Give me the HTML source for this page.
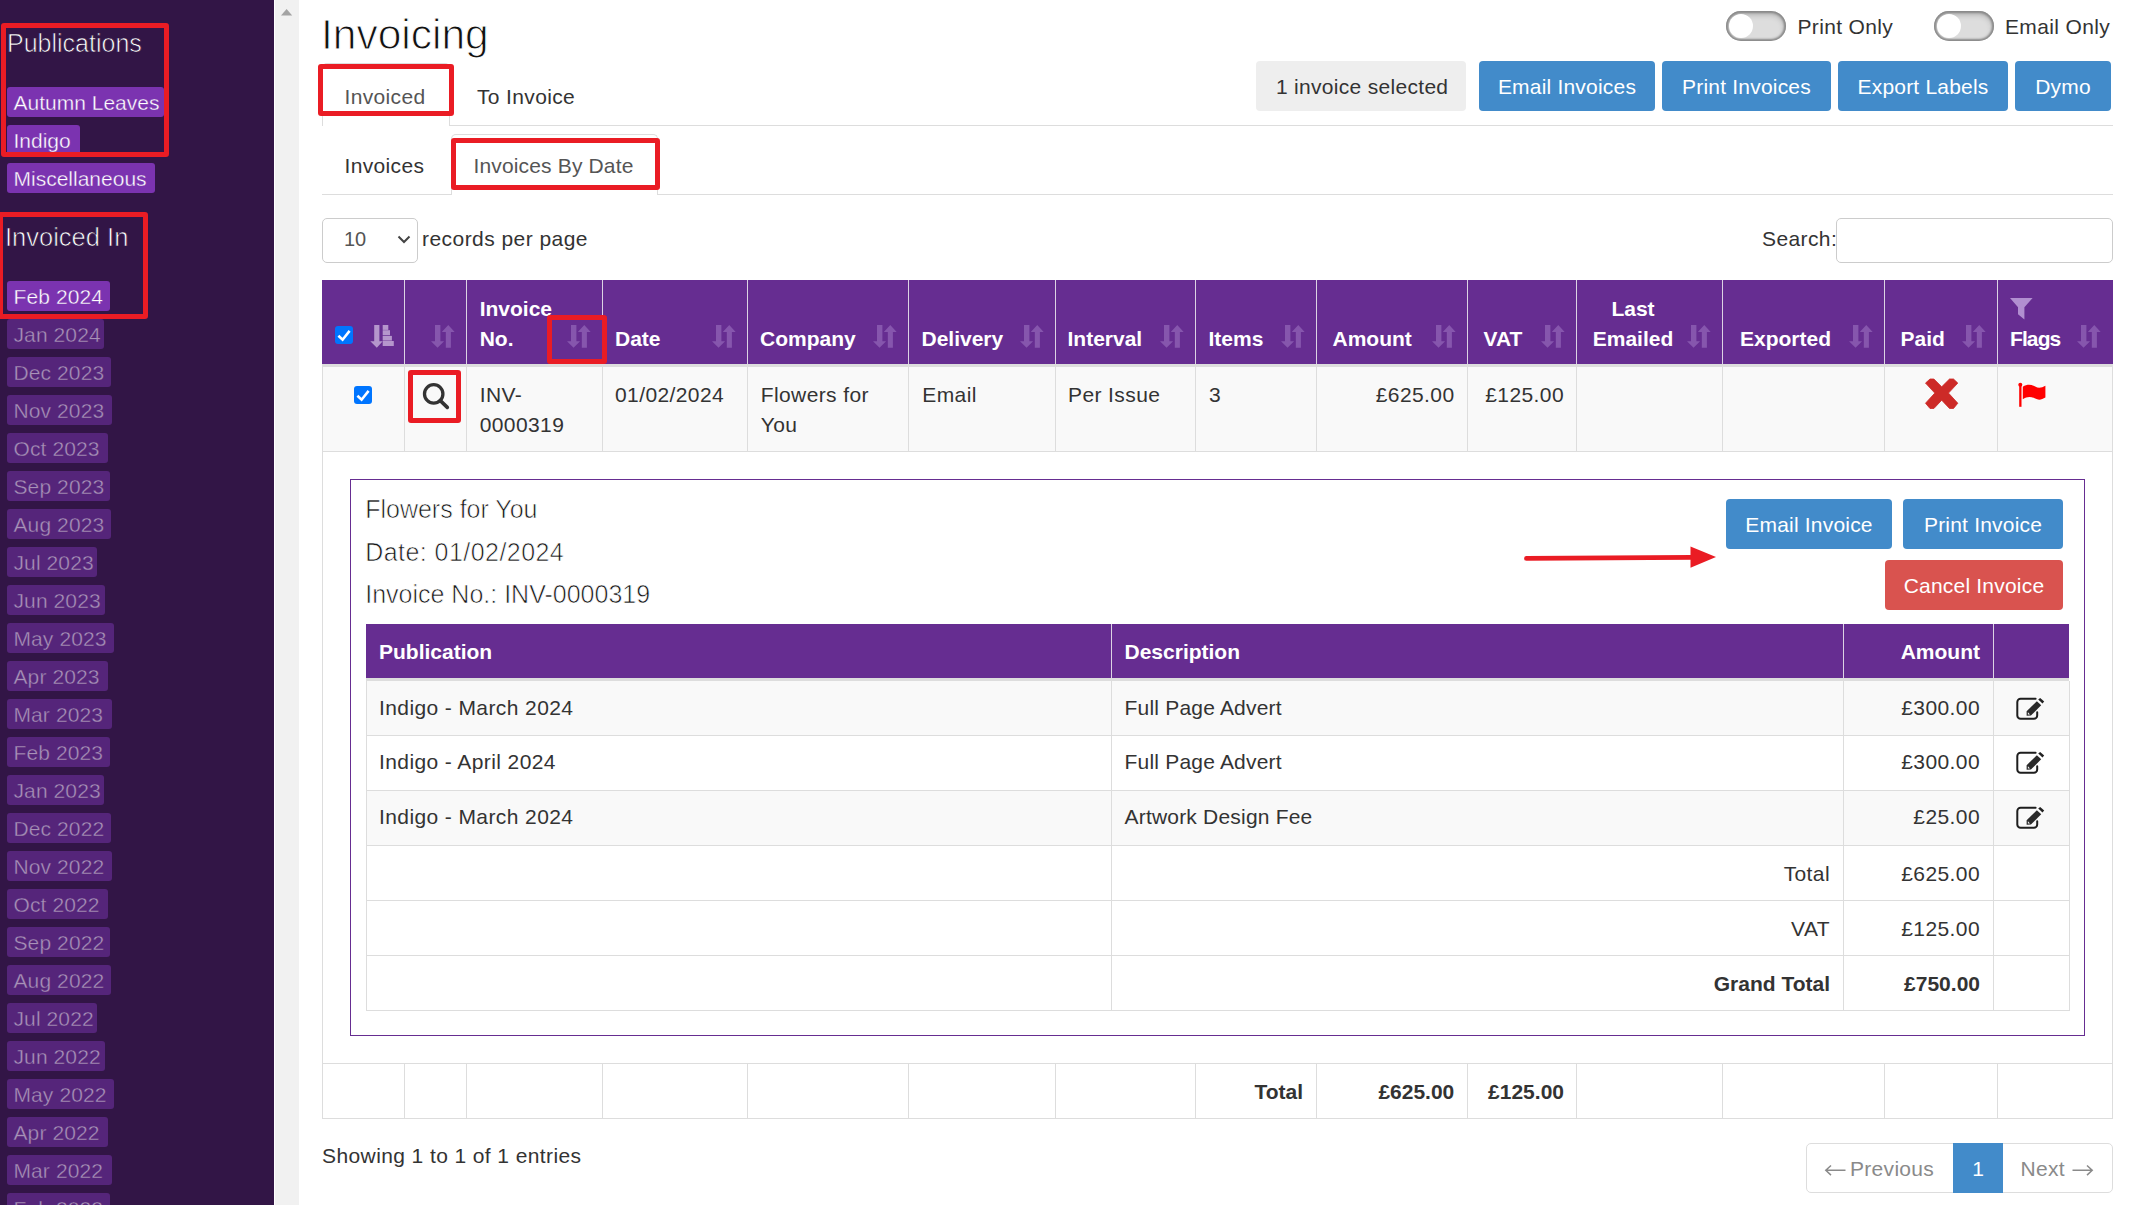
<!DOCTYPE html>
<html><head><meta charset="utf-8"><title>Invoicing</title><style>
*{margin:0;padding:0;box-sizing:border-box}
html,body{width:2132px;height:1205px;overflow:hidden;background:#fff}
body{position:relative;font-family:"Liberation Sans",sans-serif;color:#333}
.t{position:absolute;white-space:nowrap;line-height:1}
.b{position:absolute}
svg{position:absolute;overflow:visible}
</style></head><body>
<div class="b" style="left:0px;top:0px;width:274px;height:1205px;background:#321546;"></div>
<div class="b" style="left:274px;top:0px;width:1px;height:1205px;background:#fff;"></div>
<div class="b" style="left:275px;top:0px;width:24px;height:1205px;background:#f1f1f1;"></div>
<svg style="left:281px;top:9px" width="12" height="7"><path d="M0 6.5 L5.6 0 L11.2 6.5 Z" fill="#a3a3a3"/></svg>
<div class="t " style="left:7.0px;top:30.5px;font-size:25px;color:#fff;-webkit-text-stroke:0.7px #321546;">Publications</div>
<div class="b" style="left:7px;top:87px;width:157px;height:30px;background:#7b33b0;border-radius:3px;"></div>
<div class="t " style="left:13.5px;top:91.8px;font-size:21px;color:#fff;letter-spacing:0.0px;-webkit-text-stroke:0.35px #7b33b0;">Autumn Leaves</div>
<div class="b" style="left:7px;top:125px;width:73px;height:30px;background:#7b33b0;border-radius:3px;"></div>
<div class="t " style="left:13.5px;top:129.8px;font-size:21px;color:#fff;letter-spacing:0.0px;-webkit-text-stroke:0.35px #7b33b0;">Indigo</div>
<div class="b" style="left:7px;top:163px;width:148px;height:30px;background:#7b33b0;border-radius:3px;"></div>
<div class="t " style="left:13.5px;top:167.8px;font-size:21px;color:#fff;letter-spacing:0.0px;-webkit-text-stroke:0.35px #7b33b0;">Miscellaneous</div>
<div class="t " style="left:5.0px;top:224.9px;font-size:25px;color:#fff;font-size:25.5px;-webkit-text-stroke:0.7px #321546;">Invoiced In</div>
<div class="b" style="left:7px;top:281px;width:103px;height:30px;background:#7b33b0;border-radius:3px;"></div>
<div class="t " style="left:13.5px;top:285.8px;font-size:21px;color:#fff;letter-spacing:0.1px;-webkit-text-stroke:0.35px #7b33b0;">Feb 2024</div>
<div class="b" style="left:7px;top:319px;width:97px;height:30px;background:#55257a;border-radius:3px;"></div>
<div class="t " style="left:13.5px;top:323.8px;font-size:21px;color:#a892b8;letter-spacing:0.1px;-webkit-text-stroke:0.35px #55257a;">Jan 2024</div>
<div class="b" style="left:7px;top:357px;width:104px;height:30px;background:#55257a;border-radius:3px;"></div>
<div class="t " style="left:13.5px;top:361.8px;font-size:21px;color:#a892b8;letter-spacing:0.1px;-webkit-text-stroke:0.35px #55257a;">Dec 2023</div>
<div class="b" style="left:7px;top:395px;width:105px;height:30px;background:#55257a;border-radius:3px;"></div>
<div class="t " style="left:13.5px;top:399.8px;font-size:21px;color:#a892b8;letter-spacing:0.1px;-webkit-text-stroke:0.35px #55257a;">Nov 2023</div>
<div class="b" style="left:7px;top:433px;width:101px;height:30px;background:#55257a;border-radius:3px;"></div>
<div class="t " style="left:13.5px;top:437.8px;font-size:21px;color:#a892b8;letter-spacing:0.1px;-webkit-text-stroke:0.35px #55257a;">Oct 2023</div>
<div class="b" style="left:7px;top:471px;width:103px;height:30px;background:#55257a;border-radius:3px;"></div>
<div class="t " style="left:13.5px;top:475.8px;font-size:21px;color:#a892b8;letter-spacing:0.1px;-webkit-text-stroke:0.35px #55257a;">Sep 2023</div>
<div class="b" style="left:7px;top:509px;width:104px;height:30px;background:#55257a;border-radius:3px;"></div>
<div class="t " style="left:13.5px;top:513.8px;font-size:21px;color:#a892b8;letter-spacing:0.1px;-webkit-text-stroke:0.35px #55257a;">Aug 2023</div>
<div class="b" style="left:7px;top:547px;width:90px;height:30px;background:#55257a;border-radius:3px;"></div>
<div class="t " style="left:13.5px;top:551.8px;font-size:21px;color:#a892b8;letter-spacing:0.1px;-webkit-text-stroke:0.35px #55257a;">Jul 2023</div>
<div class="b" style="left:7px;top:585px;width:98px;height:30px;background:#55257a;border-radius:3px;"></div>
<div class="t " style="left:13.5px;top:589.8px;font-size:21px;color:#a892b8;letter-spacing:0.1px;-webkit-text-stroke:0.35px #55257a;">Jun 2023</div>
<div class="b" style="left:7px;top:623px;width:107px;height:30px;background:#55257a;border-radius:3px;"></div>
<div class="t " style="left:13.5px;top:627.8px;font-size:21px;color:#a892b8;letter-spacing:0.1px;-webkit-text-stroke:0.35px #55257a;">May 2023</div>
<div class="b" style="left:7px;top:661px;width:101px;height:30px;background:#55257a;border-radius:3px;"></div>
<div class="t " style="left:13.5px;top:665.8px;font-size:21px;color:#a892b8;letter-spacing:0.1px;-webkit-text-stroke:0.35px #55257a;">Apr 2023</div>
<div class="b" style="left:7px;top:699px;width:105px;height:30px;background:#55257a;border-radius:3px;"></div>
<div class="t " style="left:13.5px;top:703.8px;font-size:21px;color:#a892b8;letter-spacing:0.1px;-webkit-text-stroke:0.35px #55257a;">Mar 2023</div>
<div class="b" style="left:7px;top:737px;width:103px;height:30px;background:#55257a;border-radius:3px;"></div>
<div class="t " style="left:13.5px;top:741.8px;font-size:21px;color:#a892b8;letter-spacing:0.1px;-webkit-text-stroke:0.35px #55257a;">Feb 2023</div>
<div class="b" style="left:7px;top:775px;width:97px;height:30px;background:#55257a;border-radius:3px;"></div>
<div class="t " style="left:13.5px;top:779.8px;font-size:21px;color:#a892b8;letter-spacing:0.1px;-webkit-text-stroke:0.35px #55257a;">Jan 2023</div>
<div class="b" style="left:7px;top:813px;width:104px;height:30px;background:#55257a;border-radius:3px;"></div>
<div class="t " style="left:13.5px;top:817.8px;font-size:21px;color:#a892b8;letter-spacing:0.1px;-webkit-text-stroke:0.35px #55257a;">Dec 2022</div>
<div class="b" style="left:7px;top:851px;width:105px;height:30px;background:#55257a;border-radius:3px;"></div>
<div class="t " style="left:13.5px;top:855.8px;font-size:21px;color:#a892b8;letter-spacing:0.1px;-webkit-text-stroke:0.35px #55257a;">Nov 2022</div>
<div class="b" style="left:7px;top:889px;width:101px;height:30px;background:#55257a;border-radius:3px;"></div>
<div class="t " style="left:13.5px;top:893.8px;font-size:21px;color:#a892b8;letter-spacing:0.1px;-webkit-text-stroke:0.35px #55257a;">Oct 2022</div>
<div class="b" style="left:7px;top:927px;width:103px;height:30px;background:#55257a;border-radius:3px;"></div>
<div class="t " style="left:13.5px;top:931.8px;font-size:21px;color:#a892b8;letter-spacing:0.1px;-webkit-text-stroke:0.35px #55257a;">Sep 2022</div>
<div class="b" style="left:7px;top:965px;width:104px;height:30px;background:#55257a;border-radius:3px;"></div>
<div class="t " style="left:13.5px;top:969.8px;font-size:21px;color:#a892b8;letter-spacing:0.1px;-webkit-text-stroke:0.35px #55257a;">Aug 2022</div>
<div class="b" style="left:7px;top:1003px;width:90px;height:30px;background:#55257a;border-radius:3px;"></div>
<div class="t " style="left:13.5px;top:1007.8px;font-size:21px;color:#a892b8;letter-spacing:0.1px;-webkit-text-stroke:0.35px #55257a;">Jul 2022</div>
<div class="b" style="left:7px;top:1041px;width:98px;height:30px;background:#55257a;border-radius:3px;"></div>
<div class="t " style="left:13.5px;top:1045.8px;font-size:21px;color:#a892b8;letter-spacing:0.1px;-webkit-text-stroke:0.35px #55257a;">Jun 2022</div>
<div class="b" style="left:7px;top:1079px;width:107px;height:30px;background:#55257a;border-radius:3px;"></div>
<div class="t " style="left:13.5px;top:1083.8px;font-size:21px;color:#a892b8;letter-spacing:0.1px;-webkit-text-stroke:0.35px #55257a;">May 2022</div>
<div class="b" style="left:7px;top:1117px;width:101px;height:30px;background:#55257a;border-radius:3px;"></div>
<div class="t " style="left:13.5px;top:1121.8px;font-size:21px;color:#a892b8;letter-spacing:0.1px;-webkit-text-stroke:0.35px #55257a;">Apr 2022</div>
<div class="b" style="left:7px;top:1155px;width:105px;height:30px;background:#55257a;border-radius:3px;"></div>
<div class="t " style="left:13.5px;top:1159.8px;font-size:21px;color:#a892b8;letter-spacing:0.1px;-webkit-text-stroke:0.35px #55257a;">Mar 2022</div>
<div class="b" style="left:7px;top:1193px;width:103px;height:30px;background:#55257a;border-radius:3px;"></div>
<div class="t " style="left:13.5px;top:1197.8px;font-size:21px;color:#a892b8;letter-spacing:0.1px;-webkit-text-stroke:0.35px #55257a;">Feb 2022</div>
<div class="b" style="left:1px;top:23px;width:168px;height:134px;border:5px solid #ea1c24;border-radius:3px;box-sizing:border-box;"></div>
<div class="b" style="left:-2px;top:212px;width:150px;height:107px;border:5px solid #ea1c24;border-radius:3px;box-sizing:border-box;"></div>
<div class="t " style="left:321.0px;top:14.0px;font-size:42.5px;color:#111;-webkit-text-stroke:1.0px #fff;">Invoicing</div>
<div class="b" style="left:322px;top:125px;width:1791px;height:1px;background:#ddd;"></div>
<div class="b" style="left:322px;top:63px;width:128px;height:63px;background:#fff;border:1px solid #ddd;border-bottom:none;border-radius:5px 5px 0 0;"></div>
<div class="t " style="left:344.5px;top:86.2px;font-size:21px;color:#555;letter-spacing:0.35px;">Invoiced</div>
<div class="t " style="left:477.0px;top:86.2px;font-size:21px;color:#333;letter-spacing:0.35px;">To Invoice</div>
<div class="b" style="left:318px;top:64px;width:136px;height:52px;border:5px solid #ea1c24;border-radius:3px;box-sizing:border-box;"></div>
<div class="b" style="left:322px;top:194px;width:1791px;height:1px;background:#ddd;"></div>
<div class="b" style="left:451px;top:134px;width:207px;height:61px;background:#fff;border:1px solid #ddd;border-bottom:none;border-radius:5px 5px 0 0;"></div>
<div class="t " style="left:344.5px;top:154.8px;font-size:21px;color:#333;letter-spacing:0.35px;">Invoices</div>
<div class="t " style="left:473.5px;top:154.8px;font-size:21px;color:#555;letter-spacing:0.15px;">Invoices By Date</div>
<div class="b" style="left:451px;top:138px;width:209px;height:52px;border:5px solid #ea1c24;border-radius:3px;box-sizing:border-box;"></div>
<div class="b" style="left:322px;top:218px;width:96px;height:45px;border:1px solid #ccc;border-radius:5px;background:#fff;"></div>
<div class="t " style="left:344.0px;top:229.2px;font-size:21px;color:#555;font-size:20px;">10</div>
<svg style="left:397px;top:235px" width="14" height="9"><path d="M1.5 1.5 L7 7 L12.5 1.5" fill="none" stroke="#444" stroke-width="2"/></svg>
<div class="t " style="left:422.0px;top:227.5px;font-size:21px;color:#333;letter-spacing:0.45px;">records per page</div>
<div class="t " style="left:1762.0px;top:227.5px;font-size:21px;color:#333;letter-spacing:0.4px;">Search:</div>
<div class="b" style="left:1836px;top:218px;width:277px;height:45px;border:1px solid #ccc;border-radius:5px;background:#fff;"></div>
<div class="b" style="left:1726px;top:11px;width:60px;height:30px;background:#ddd;border-radius:15px;box-shadow:inset 0 0 2px 2px #8a8a8a, inset 0 3px 6px rgba(0,0,0,.25);"></div>
<div class="b" style="left:1729px;top:14px;width:24px;height:24px;background:#fff;border-radius:50%;"></div>
<div class="t " style="left:1797.5px;top:16.2px;font-size:21px;color:#333;letter-spacing:0.35px;">Print Only</div>
<div class="b" style="left:1934px;top:11px;width:60px;height:30px;background:#ddd;border-radius:15px;box-shadow:inset 0 0 2px 2px #8a8a8a, inset 0 3px 6px rgba(0,0,0,.25);"></div>
<div class="b" style="left:1937px;top:14px;width:24px;height:24px;background:#fff;border-radius:50%;"></div>
<div class="t " style="left:2005.0px;top:16.2px;font-size:21px;color:#333;letter-spacing:0.35px;">Email Only</div>
<div class="b" style="left:1256px;top:61px;width:210px;height:50px;background:#eee;border-radius:4px;"></div>
<div class="t " style="left:1276.0px;top:75.7px;font-size:21px;color:#333;letter-spacing:0.3px;">1 invoice selected</div>
<div class="b" style="left:1479px;top:61px;width:176px;height:50px;background:#428bca;border-radius:4px;"></div>
<div class="t" style="left:1479px;width:176px;top:75.7px;font-size:21px;color:#fff;text-align:center;letter-spacing:0.2px">Email Invoices</div>
<div class="b" style="left:1662px;top:61px;width:169px;height:50px;background:#428bca;border-radius:4px;"></div>
<div class="t" style="left:1662px;width:169px;top:75.7px;font-size:21px;color:#fff;text-align:center;letter-spacing:0.2px">Print Invoices</div>
<div class="b" style="left:1838px;top:61px;width:170px;height:50px;background:#428bca;border-radius:4px;"></div>
<div class="t" style="left:1838px;width:170px;top:75.7px;font-size:21px;color:#fff;text-align:center;letter-spacing:0.2px">Export Labels</div>
<div class="b" style="left:2015px;top:61px;width:96px;height:50px;background:#428bca;border-radius:4px;"></div>
<div class="t" style="left:2015px;width:96px;top:75.7px;font-size:21px;color:#fff;text-align:center;letter-spacing:0.2px">Dymo</div>
<div class="b" style="left:322px;top:280px;width:1791px;height:84px;background:#662d91;"></div>
<div class="b" style="left:404px;top:280px;width:1px;height:84px;background:#dcd3e3;"></div>
<div class="b" style="left:466px;top:280px;width:1px;height:84px;background:#dcd3e3;"></div>
<div class="b" style="left:602px;top:280px;width:1px;height:84px;background:#dcd3e3;"></div>
<div class="b" style="left:747px;top:280px;width:1px;height:84px;background:#dcd3e3;"></div>
<div class="b" style="left:908px;top:280px;width:1px;height:84px;background:#dcd3e3;"></div>
<div class="b" style="left:1055px;top:280px;width:1px;height:84px;background:#dcd3e3;"></div>
<div class="b" style="left:1195px;top:280px;width:1px;height:84px;background:#dcd3e3;"></div>
<div class="b" style="left:1316px;top:280px;width:1px;height:84px;background:#dcd3e3;"></div>
<div class="b" style="left:1467px;top:280px;width:1px;height:84px;background:#dcd3e3;"></div>
<div class="b" style="left:1576px;top:280px;width:1px;height:84px;background:#dcd3e3;"></div>
<div class="b" style="left:1722px;top:280px;width:1px;height:84px;background:#dcd3e3;"></div>
<div class="b" style="left:1884px;top:280px;width:1px;height:84px;background:#dcd3e3;"></div>
<div class="b" style="left:1997px;top:280px;width:1px;height:84px;background:#dcd3e3;"></div>
<div class="b" style="left:322px;top:364px;width:1791px;height:3px;background:#ddd;"></div>
<svg style="left:335px;top:326px" width="18" height="18" viewBox="0 0 18 18"><rect x="0" y="0" width="18" height="18" rx="3" fill="#0075ff"/><path d="M3.4 9.8 L7.6 13.7 L14.6 4.9" fill="none" stroke="#fff" stroke-width="2.6"/></svg>
<svg style="left:369.7px;top:325px" width="24" height="23" viewBox="0 0 24 23"><path d="M4.2 0 H9.4 V16.3 H12.7 L6.8 22.8 L0.3 16.3 H4.2 Z" fill="#b596cc"/><rect x="12.7" y="0" width="5.6" height="4.9" fill="#b596cc"/><rect x="12.7" y="5.2" width="7.3" height="5" fill="#b596cc"/><rect x="12.7" y="10.9" width="9.2" height="4.7" fill="#b596cc"/><rect x="12.7" y="16" width="11.1" height="5" fill="#b596cc"/></svg>
<svg style="left:430.5px;top:325px" width="24" height="23" viewBox="0 0 24 23"><path d="M4 0 H9.4 V16.3 H13.1 L6.55 22.8 L0 16.3 H4 Z M14.8 22.8 V6.9 H10.8 L17.25 0 L23.7 6.9 H19.9 V22.8 Z" fill="#8656ad"/></svg>
<svg style="left:566.5px;top:325px" width="24" height="23" viewBox="0 0 24 23"><path d="M4 0 H9.4 V16.3 H13.1 L6.55 22.8 L0 16.3 H4 Z M14.8 22.8 V6.9 H10.8 L17.25 0 L23.7 6.9 H19.9 V22.8 Z" fill="#8656ad"/></svg>
<svg style="left:711.5px;top:325px" width="24" height="23" viewBox="0 0 24 23"><path d="M4 0 H9.4 V16.3 H13.1 L6.55 22.8 L0 16.3 H4 Z M14.8 22.8 V6.9 H10.8 L17.25 0 L23.7 6.9 H19.9 V22.8 Z" fill="#8656ad"/></svg>
<svg style="left:872.5px;top:325px" width="24" height="23" viewBox="0 0 24 23"><path d="M4 0 H9.4 V16.3 H13.1 L6.55 22.8 L0 16.3 H4 Z M14.8 22.8 V6.9 H10.8 L17.25 0 L23.7 6.9 H19.9 V22.8 Z" fill="#8656ad"/></svg>
<svg style="left:1019.5px;top:325px" width="24" height="23" viewBox="0 0 24 23"><path d="M4 0 H9.4 V16.3 H13.1 L6.55 22.8 L0 16.3 H4 Z M14.8 22.8 V6.9 H10.8 L17.25 0 L23.7 6.9 H19.9 V22.8 Z" fill="#8656ad"/></svg>
<svg style="left:1159.5px;top:325px" width="24" height="23" viewBox="0 0 24 23"><path d="M4 0 H9.4 V16.3 H13.1 L6.55 22.8 L0 16.3 H4 Z M14.8 22.8 V6.9 H10.8 L17.25 0 L23.7 6.9 H19.9 V22.8 Z" fill="#8656ad"/></svg>
<svg style="left:1280.5px;top:325px" width="24" height="23" viewBox="0 0 24 23"><path d="M4 0 H9.4 V16.3 H13.1 L6.55 22.8 L0 16.3 H4 Z M14.8 22.8 V6.9 H10.8 L17.25 0 L23.7 6.9 H19.9 V22.8 Z" fill="#8656ad"/></svg>
<svg style="left:1431.5px;top:325px" width="24" height="23" viewBox="0 0 24 23"><path d="M4 0 H9.4 V16.3 H13.1 L6.55 22.8 L0 16.3 H4 Z M14.8 22.8 V6.9 H10.8 L17.25 0 L23.7 6.9 H19.9 V22.8 Z" fill="#8656ad"/></svg>
<svg style="left:1540.5px;top:325px" width="24" height="23" viewBox="0 0 24 23"><path d="M4 0 H9.4 V16.3 H13.1 L6.55 22.8 L0 16.3 H4 Z M14.8 22.8 V6.9 H10.8 L17.25 0 L23.7 6.9 H19.9 V22.8 Z" fill="#8656ad"/></svg>
<svg style="left:1686.5px;top:325px" width="24" height="23" viewBox="0 0 24 23"><path d="M4 0 H9.4 V16.3 H13.1 L6.55 22.8 L0 16.3 H4 Z M14.8 22.8 V6.9 H10.8 L17.25 0 L23.7 6.9 H19.9 V22.8 Z" fill="#8656ad"/></svg>
<svg style="left:1848.5px;top:325px" width="24" height="23" viewBox="0 0 24 23"><path d="M4 0 H9.4 V16.3 H13.1 L6.55 22.8 L0 16.3 H4 Z M14.8 22.8 V6.9 H10.8 L17.25 0 L23.7 6.9 H19.9 V22.8 Z" fill="#8656ad"/></svg>
<svg style="left:1961.5px;top:325px" width="24" height="23" viewBox="0 0 24 23"><path d="M4 0 H9.4 V16.3 H13.1 L6.55 22.8 L0 16.3 H4 Z M14.8 22.8 V6.9 H10.8 L17.25 0 L23.7 6.9 H19.9 V22.8 Z" fill="#8656ad"/></svg>
<svg style="left:2076.5px;top:325px" width="24" height="23" viewBox="0 0 24 23"><path d="M4 0 H9.4 V16.3 H13.1 L6.55 22.8 L0 16.3 H4 Z M14.8 22.8 V6.9 H10.8 L17.25 0 L23.7 6.9 H19.9 V22.8 Z" fill="#8656ad"/></svg>
<div class="t " style="left:479.7px;top:297.9px;font-size:21px;color:#fff;font-weight:700;">Invoice</div>
<div class="t " style="left:479.7px;top:327.9px;font-size:21px;color:#fff;font-weight:700;">No.</div>
<div class="t " style="left:615.0px;top:327.7px;font-size:21px;color:#fff;font-weight:700;">Date</div>
<div class="t " style="left:760.0px;top:327.7px;font-size:21px;color:#fff;font-weight:700;">Company</div>
<div class="t " style="left:921.5px;top:327.7px;font-size:21px;color:#fff;font-weight:700;">Delivery</div>
<div class="t " style="left:1067.5px;top:327.7px;font-size:21px;color:#fff;font-weight:700;">Interval</div>
<div class="t " style="left:1208.5px;top:327.7px;font-size:21px;color:#fff;font-weight:700;">Items</div>
<div class="t " style="left:1332.5px;top:327.7px;font-size:21px;color:#fff;font-weight:700;">Amount</div>
<div class="t " style="left:1483.5px;top:327.7px;font-size:21px;color:#fff;font-weight:700;">VAT</div>
<div class="t " style="left:1740.0px;top:327.7px;font-size:21px;color:#fff;font-weight:700;">Exported</div>
<div class="t " style="left:1900.5px;top:327.7px;font-size:21px;color:#fff;font-weight:700;">Paid</div>
<div class="t " style="left:2010.0px;top:327.7px;font-size:21px;color:#fff;font-weight:700;letter-spacing:-0.9px;">Flags</div>
<div class="t" style="left:1583px;width:100px;top:297.9px;font-size:21px;font-weight:700;color:#fff;text-align:center">Last</div>
<div class="t" style="left:1583px;width:100px;top:327.7px;font-size:21px;font-weight:700;color:#fff;text-align:center">Emailed</div>
<svg style="left:2009.5px;top:298px" width="23" height="22" viewBox="0 0 23 22"><path d="M0 0 H22.6 L14.4 9.2 V21.6 L8 16.2 V9.2 Z" fill="#b18fd0"/></svg>
<div class="b" style="left:322px;top:367px;width:1791px;height:85px;background:#f9f9f9;"></div>
<div class="b" style="left:322px;top:367px;width:1px;height:85px;background:#ddd;"></div>
<div class="b" style="left:404px;top:367px;width:1px;height:85px;background:#ddd;"></div>
<div class="b" style="left:466px;top:367px;width:1px;height:85px;background:#ddd;"></div>
<div class="b" style="left:602px;top:367px;width:1px;height:85px;background:#ddd;"></div>
<div class="b" style="left:747px;top:367px;width:1px;height:85px;background:#ddd;"></div>
<div class="b" style="left:908px;top:367px;width:1px;height:85px;background:#ddd;"></div>
<div class="b" style="left:1055px;top:367px;width:1px;height:85px;background:#ddd;"></div>
<div class="b" style="left:1195px;top:367px;width:1px;height:85px;background:#ddd;"></div>
<div class="b" style="left:1316px;top:367px;width:1px;height:85px;background:#ddd;"></div>
<div class="b" style="left:1467px;top:367px;width:1px;height:85px;background:#ddd;"></div>
<div class="b" style="left:1576px;top:367px;width:1px;height:85px;background:#ddd;"></div>
<div class="b" style="left:1722px;top:367px;width:1px;height:85px;background:#ddd;"></div>
<div class="b" style="left:1884px;top:367px;width:1px;height:85px;background:#ddd;"></div>
<div class="b" style="left:1997px;top:367px;width:1px;height:85px;background:#ddd;"></div>
<div class="b" style="left:2112px;top:367px;width:1px;height:85px;background:#ddd;"></div>
<div class="b" style="left:322px;top:451px;width:1791px;height:1px;background:#ddd;"></div>
<svg style="left:354px;top:386px" width="18" height="18" viewBox="0 0 18 18"><rect x="0" y="0" width="18" height="18" rx="3" fill="#0075ff"/><path d="M3.4 9.8 L7.6 13.7 L14.6 4.9" fill="none" stroke="#fff" stroke-width="2.6"/></svg>
<svg style="left:420px;top:380px" width="32" height="32" viewBox="0 0 32 32"><circle cx="13.7" cy="13.9" r="9.2" fill="none" stroke="#333" stroke-width="3.3"/><path d="M20.3 20.6 L27.3 27.4" stroke="#333" stroke-width="3.6" stroke-linecap="round"/></svg>
<div class="t " style="left:479.7px;top:383.8px;font-size:21px;color:#333;letter-spacing:0.4px;">INV-</div>
<div class="t " style="left:479.7px;top:413.8px;font-size:21px;color:#333;letter-spacing:0.4px;">0000319</div>
<div class="t " style="left:615.0px;top:383.8px;font-size:21px;color:#333;letter-spacing:0.4px;">01/02/2024</div>
<div class="t " style="left:760.7px;top:383.8px;font-size:21px;color:#333;letter-spacing:0.4px;">Flowers for</div>
<div class="t " style="left:760.7px;top:413.8px;font-size:21px;color:#333;letter-spacing:0.4px;">You</div>
<div class="t " style="left:922.3px;top:383.8px;font-size:21px;color:#333;letter-spacing:0.4px;">Email</div>
<div class="t " style="left:1068.0px;top:383.8px;font-size:21px;color:#333;letter-spacing:0.4px;">Per Issue</div>
<div class="t " style="left:1208.9px;top:383.8px;font-size:21px;color:#333;letter-spacing:0.4px;">3</div>
<div class="t" style="right:677.5px;top:383.8px;font-size:21px;color:#333;letter-spacing:0.4px;">£625.00</div>
<div class="t" style="right:568.0px;top:383.8px;font-size:21px;color:#333;letter-spacing:0.4px;">£125.00</div>
<svg style="left:1920px;top:374px" width="44" height="40" viewBox="0 0 44 40"><path d="M5.5 9.1 L10 5 L13.9 5 L21.7 12.8 L29.5 5 L33.5 5 L37.8 9.1 L28.5 19.1 L37.8 29.2 L33.5 34.5 L29.5 34.5 L21.7 26.2 L13.9 34.5 L10 34.5 L5.5 29.2 L14.8 19.1 Z" fill="#cd2a27" stroke="#cd2a27" stroke-width="0.8" stroke-linejoin="round"/></svg>
<svg style="left:2017px;top:382px" width="30" height="26" viewBox="0 0 30 26"><circle cx="3.3" cy="2.8" r="2" fill="#f00"/><rect x="2.2" y="3" width="2.3" height="21.8" fill="#f00"/><path d="M5.8 4.8 C10 2.2 14 2.2 18.2 4.6 C22 6.8 25 5.5 28.4 3.8 V15.5 C25 17.5 22 18.6 18.2 16.6 C14 14.4 10 14.4 5.8 17.3 Z" fill="#f00"/></svg>
<div class="b" style="left:408px;top:370px;width:53px;height:53px;border:5px solid #ea1c24;border-radius:3px;box-sizing:border-box;"></div>
<div class="b" style="left:547px;top:315px;width:60px;height:49px;border:5px solid #ea1c24;border-radius:3px;box-sizing:border-box;"></div>
<div class="b" style="left:322px;top:452px;width:1px;height:611px;background:#ddd;"></div>
<div class="b" style="left:2112px;top:452px;width:1px;height:611px;background:#ddd;"></div>
<div class="b" style="left:322px;top:1063px;width:1791px;height:1px;background:#ddd;"></div>
<div class="b" style="left:322px;top:1118px;width:1791px;height:1px;background:#ddd;"></div>
<div class="b" style="left:322px;top:1063px;width:1px;height:56px;background:#ddd;"></div>
<div class="b" style="left:404px;top:1063px;width:1px;height:56px;background:#ddd;"></div>
<div class="b" style="left:466px;top:1063px;width:1px;height:56px;background:#ddd;"></div>
<div class="b" style="left:602px;top:1063px;width:1px;height:56px;background:#ddd;"></div>
<div class="b" style="left:747px;top:1063px;width:1px;height:56px;background:#ddd;"></div>
<div class="b" style="left:908px;top:1063px;width:1px;height:56px;background:#ddd;"></div>
<div class="b" style="left:1055px;top:1063px;width:1px;height:56px;background:#ddd;"></div>
<div class="b" style="left:1195px;top:1063px;width:1px;height:56px;background:#ddd;"></div>
<div class="b" style="left:1316px;top:1063px;width:1px;height:56px;background:#ddd;"></div>
<div class="b" style="left:1467px;top:1063px;width:1px;height:56px;background:#ddd;"></div>
<div class="b" style="left:1576px;top:1063px;width:1px;height:56px;background:#ddd;"></div>
<div class="b" style="left:1722px;top:1063px;width:1px;height:56px;background:#ddd;"></div>
<div class="b" style="left:1884px;top:1063px;width:1px;height:56px;background:#ddd;"></div>
<div class="b" style="left:1997px;top:1063px;width:1px;height:56px;background:#ddd;"></div>
<div class="b" style="left:2112px;top:1063px;width:1px;height:56px;background:#ddd;"></div>
<div class="t" style="right:829.0px;top:1081.3px;font-size:21px;color:#333;font-weight:700;">Total</div>
<div class="t" style="right:677.7px;top:1081.3px;font-size:21px;color:#333;font-weight:700;">£625.00</div>
<div class="t" style="right:568.0px;top:1081.3px;font-size:21px;color:#333;font-weight:700;">£125.00</div>
<div class="t " style="left:322.0px;top:1145.2px;font-size:21px;color:#333;letter-spacing:0.4px;">Showing 1 to 1 of 1 entries</div>
<div class="b" style="left:1806px;top:1143px;width:307px;height:50px;border:1px solid #ddd;border-radius:5px;background:#fff;"></div>
<div class="b" style="left:1953px;top:1143px;width:50px;height:50px;background:#428bca;"></div>
<div class="t " style="left:1850.0px;top:1157.8px;font-size:21px;color:#8a8a8a;letter-spacing:0.3px;">Previous</div>
<svg style="left:1824px;top:1163px" width="24" height="15"><path d="M2 7.3 H21.5 M7 2.5 L1.8 7.3 L7 12.1" fill="none" stroke="#8a8a8a" stroke-width="1.5"/></svg>
<div class="t" style="left:1953px;width:50px;top:1157.8px;font-size:21px;color:#fff;text-align:center">1</div>
<div class="t " style="left:2020.5px;top:1157.8px;font-size:21px;color:#8a8a8a;letter-spacing:0.3px;">Next</div>
<svg style="left:2071px;top:1163px" width="24" height="15"><path d="M1.5 7.3 H21 M16 2.5 L21.2 7.3 L16 12.1" fill="none" stroke="#8a8a8a" stroke-width="1.5"/></svg>
<div class="b" style="left:350px;top:479px;width:1735px;height:557px;border:1px solid #662d91;"></div>
<div class="t " style="left:365.2px;top:496.5px;font-size:25px;color:#151515;-webkit-text-stroke:0.65px #fff;">Flowers for You</div>
<div class="t " style="left:365.2px;top:539.5px;font-size:25px;color:#151515;letter-spacing:0.45px;-webkit-text-stroke:0.65px #fff;">Date: 01/02/2024</div>
<div class="t " style="left:365.2px;top:582.4px;font-size:25px;color:#151515;-webkit-text-stroke:0.65px #fff;">Invoice No.: INV-0000319</div>
<div class="b" style="left:1726px;top:499px;width:166px;height:50px;background:#428bca;border-radius:4px;"></div>
<div class="t" style="left:1726px;width:166px;top:513.6px;font-size:21px;color:#fff;text-align:center;letter-spacing:0.2px">Email Invoice</div>
<div class="b" style="left:1903px;top:499px;width:160px;height:50px;background:#428bca;border-radius:4px;"></div>
<div class="t" style="left:1903px;width:160px;top:513.6px;font-size:21px;color:#fff;text-align:center;letter-spacing:0.2px">Print Invoice</div>
<div class="b" style="left:1885px;top:560px;width:178px;height:50px;background:#d9534f;border-radius:4px;"></div>
<div class="t" style="left:1885px;width:178px;top:574.6px;font-size:21px;color:#fff;text-align:center;letter-spacing:0.2px">Cancel Invoice</div>
<svg style="left:1520px;top:540px" width="200" height="35"><path d="M6.5 18.4 L172 17.3" stroke="#ea1c24" stroke-width="4.8" stroke-linecap="round"/><path d="M170.5 6.5 L196 17 L170.5 27.8 Z" fill="#ea1c24"/></svg>
<div class="b" style="left:366px;top:624px;width:1703px;height:54px;background:#662d91;"></div>
<div class="b" style="left:1111px;top:624px;width:1px;height:54px;background:#dcd3e3;"></div>
<div class="b" style="left:1843px;top:624px;width:1px;height:54px;background:#dcd3e3;"></div>
<div class="b" style="left:1993px;top:624px;width:1px;height:54px;background:#dcd3e3;"></div>
<div class="b" style="left:366px;top:678px;width:1703px;height:3px;background:#ddd;"></div>
<div class="b" style="left:366px;top:681px;width:1703px;height:54px;background:#f9f9f9;"></div>
<div class="b" style="left:366px;top:735px;width:1703px;height:55px;background:#fff;"></div>
<div class="b" style="left:366px;top:790px;width:1703px;height:55px;background:#f9f9f9;"></div>
<div class="b" style="left:366px;top:845px;width:1703px;height:55px;background:#fff;"></div>
<div class="b" style="left:366px;top:900px;width:1703px;height:55px;background:#fff;"></div>
<div class="b" style="left:366px;top:955px;width:1703px;height:55px;background:#fff;"></div>
<div class="b" style="left:366px;top:735px;width:1703px;height:1px;background:#ddd;"></div>
<div class="b" style="left:366px;top:790px;width:1703px;height:1px;background:#ddd;"></div>
<div class="b" style="left:366px;top:845px;width:1703px;height:1px;background:#ddd;"></div>
<div class="b" style="left:366px;top:900px;width:1703px;height:1px;background:#ddd;"></div>
<div class="b" style="left:366px;top:955px;width:1703px;height:1px;background:#ddd;"></div>
<div class="b" style="left:366px;top:1010px;width:1703px;height:1px;background:#ddd;"></div>
<div class="b" style="left:366px;top:681px;width:1px;height:330px;background:#ddd;"></div>
<div class="b" style="left:1111px;top:681px;width:1px;height:330px;background:#ddd;"></div>
<div class="b" style="left:1843px;top:681px;width:1px;height:330px;background:#ddd;"></div>
<div class="b" style="left:1993px;top:681px;width:1px;height:330px;background:#ddd;"></div>
<div class="b" style="left:2069px;top:681px;width:1px;height:330px;background:#ddd;"></div>
<div class="t " style="left:379.0px;top:641.2px;font-size:21px;color:#fff;font-weight:700;">Publication</div>
<div class="t " style="left:1124.5px;top:641.2px;font-size:21px;color:#fff;font-weight:700;">Description</div>
<div class="t" style="right:152.0px;top:641.2px;font-size:21px;color:#fff;font-weight:700;">Amount</div>
<div class="t " style="left:379.0px;top:697.4px;font-size:21px;color:#333;letter-spacing:0.4px;">Indigo - March 2024</div>
<div class="t " style="left:1124.5px;top:697.4px;font-size:21px;color:#333;letter-spacing:0.2px;">Full Page Advert</div>
<div class="t" style="right:152.0px;top:697.4px;font-size:21px;color:#333;letter-spacing:0.4px;">£300.00</div>
<svg style="left:2005px;top:690px" width="44" height="40" viewBox="0 0 44 40"><path d="M30.6 8.8 H15.6 A3.3 3.3 0 0 0 12.3 12.1 V25.4 A3.3 3.3 0 0 0 15.6 28.7 H28.9 A3.3 3.3 0 0 0 32.2 25.4 V22.2" fill="none" stroke="#1e1e1e" stroke-width="2" stroke-linecap="round"/><path d="M21.6 25.7 L21.6 21.2 L31.9 11.3 L36.2 15.3 L25.9 25.6 Z" fill="#2a2a2a"/><path d="M22.9 24.4 V22.3 L25 24.4 Z" fill="#fafafa"/><path d="M33.2 9.6 L35.2 8 L39.2 11.6 L37.5 13.6 Z" fill="#222"/></svg>
<div class="t " style="left:379.0px;top:751.4px;font-size:21px;color:#333;letter-spacing:0.4px;">Indigo - April 2024</div>
<div class="t " style="left:1124.5px;top:751.4px;font-size:21px;color:#333;letter-spacing:0.2px;">Full Page Advert</div>
<div class="t" style="right:152.0px;top:751.4px;font-size:21px;color:#333;letter-spacing:0.4px;">£300.00</div>
<svg style="left:2005px;top:744px" width="44" height="40" viewBox="0 0 44 40"><path d="M30.6 8.8 H15.6 A3.3 3.3 0 0 0 12.3 12.1 V25.4 A3.3 3.3 0 0 0 15.6 28.7 H28.9 A3.3 3.3 0 0 0 32.2 25.4 V22.2" fill="none" stroke="#1e1e1e" stroke-width="2" stroke-linecap="round"/><path d="M21.6 25.7 L21.6 21.2 L31.9 11.3 L36.2 15.3 L25.9 25.6 Z" fill="#2a2a2a"/><path d="M22.9 24.4 V22.3 L25 24.4 Z" fill="#fafafa"/><path d="M33.2 9.6 L35.2 8 L39.2 11.6 L37.5 13.6 Z" fill="#222"/></svg>
<div class="t " style="left:379.0px;top:806.4px;font-size:21px;color:#333;letter-spacing:0.4px;">Indigo - March 2024</div>
<div class="t " style="left:1124.5px;top:806.4px;font-size:21px;color:#333;letter-spacing:0.2px;">Artwork Design Fee</div>
<div class="t" style="right:152.0px;top:806.4px;font-size:21px;color:#333;letter-spacing:0.4px;">£25.00</div>
<svg style="left:2005px;top:799px" width="44" height="40" viewBox="0 0 44 40"><path d="M30.6 8.8 H15.6 A3.3 3.3 0 0 0 12.3 12.1 V25.4 A3.3 3.3 0 0 0 15.6 28.7 H28.9 A3.3 3.3 0 0 0 32.2 25.4 V22.2" fill="none" stroke="#1e1e1e" stroke-width="2" stroke-linecap="round"/><path d="M21.6 25.7 L21.6 21.2 L31.9 11.3 L36.2 15.3 L25.9 25.6 Z" fill="#2a2a2a"/><path d="M22.9 24.4 V22.3 L25 24.4 Z" fill="#fafafa"/><path d="M33.2 9.6 L35.2 8 L39.2 11.6 L37.5 13.6 Z" fill="#222"/></svg>
<div class="t" style="right:302.0px;top:863.2px;font-size:21px;color:#333;letter-spacing:0.4px;">Total</div>
<div class="t" style="right:152.0px;top:863.2px;font-size:21px;color:#333;letter-spacing:0.4px;">£625.00</div>
<div class="t" style="right:302.0px;top:918.2px;font-size:21px;color:#333;letter-spacing:0.4px;">VAT</div>
<div class="t" style="right:152.0px;top:918.2px;font-size:21px;color:#333;letter-spacing:0.4px;">£125.00</div>
<div class="t" style="right:302.0px;top:973.2px;font-size:21px;color:#333;font-weight:700;">Grand Total</div>
<div class="t" style="right:152.0px;top:973.2px;font-size:21px;color:#333;font-weight:700;">£750.00</div>
</body></html>
